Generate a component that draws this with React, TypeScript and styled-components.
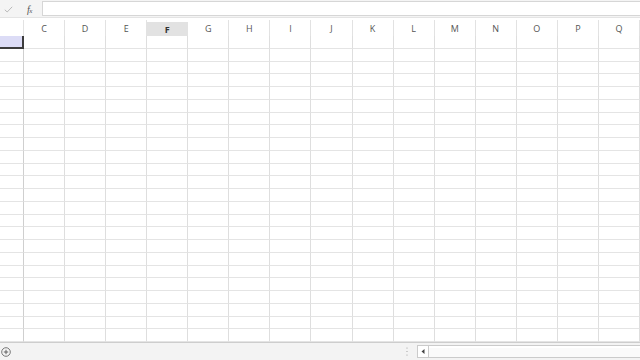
import { createGlobalStyle, styled } from "styled-components";

const GlobalStyle = createGlobalStyle`
  html, body {
    margin: 0;
    padding: 0;
    background: #ffffff;
  }
  body {
    font-family: "Open Sans", "Liberation Sans", sans-serif;
  }
`;

const Window = styled.div`
  width: 640px;
  height: 360px;
  display: flex;
  flex-direction: column;
  overflow: hidden;
  background: #ffffff;
`;

const FormulaBar = styled.div`
  height: 16px;
  display: flex;
  align-items: stretch;
  background: #f4f4f4;
  padding-top: 1px;
`;

const IconSlot = styled.div<{ $w: number }>`
  width: ${(p) => p.$w}px;
  display: flex;
  align-items: center;
  justify-content: center;
`;

const Fx = styled.span`
  font-family: "Liberation Serif", serif;
  font-style: italic;
  font-size: 10px;
  color: #555;
  letter-spacing: -0.5px;
  small {
    font-size: 7px;
  }
`;

const FormulaInput = styled.div`
  flex: 1;
  background: #ffffff;
  border: 1px solid #d6d6d6;
  border-right: none;
  margin-bottom: 1px;
`;

const Gap = styled.div`
  height: 2px;
  background: #ffffff;
  border-top: 1px solid #e4e4e4;
`;

const Grid = styled.div`
  display: grid;
  grid-template-columns: 24px repeat(15, 1fr);
`;

const HeaderRow = styled(Grid)`
  height: 15px;
  border-bottom: 1px solid #c9c9c9;
`;

const ColHead = styled.div<{ $active?: boolean }>`
  display: flex;
  align-items: center;
  justify-content: center;
  padding-top: 1px;
  font-size: 9px;
  color: ${(p) => (p.$active ? "#333" : "#555")};
  font-weight: ${(p) => (p.$active ? 700 : 400)};
  background: ${(p) => (p.$active ? "#e2e2e2" : "#ffffff")};
  border-right: 1px solid #e2e2e2;
  border-bottom: ${(p) => (p.$active ? "1px solid #9e9e9e" : "none")};
  margin-top: ${(p) => (p.$active ? "2px" : "0")};
  margin-bottom: ${(p) => (p.$active ? "-1px" : "0")};
`;

const Body = styled(Grid)`
  height: 306px;
  grid-template-rows: repeat(24, 1fr);
`;

const Cell = styled.div<{ $selected?: boolean; $edge?: boolean }>`
  box-sizing: border-box;
  border-right: 1px solid ${(p) => (p.$edge ? "#cfcfcf" : "#dedede")};
  border-bottom: 1px solid #e4e4e4;
  background: ${(p) => (p.$selected ? "#dcdcf6" : "#ffffff")};
  ${(p) =>
    p.$selected &&
    `
    border-right: 2px solid #3c3c3c;
    border-bottom: 2px solid #3c3c3c;
  `}
`;

const StatusBar = styled.div`
  flex: 1;
  display: flex;
  align-items: center;
  background: #f3f3f3;
  border-top: 1px solid #cdcdcd;
  padding-left: 1px;
`;

const AddSheet = styled.div`
  width: 10px;
  height: 10px;
  display: flex;
  align-items: center;
  justify-content: center;
`;

const Spacer = styled.div`
  flex: 1;
`;

const Dots = styled.div`
  width: 10px;
  display: flex;
  justify-content: center;
  margin-right: 5px;
`;

const Scrollbar = styled.div`
  width: 222px;
  height: 11px;
  display: flex;
  background: #ffffff;
  border: 1px solid #cbcbcb;
  border-right: none;
`;

const ScrollButton = styled.div`
  width: 10px;
  display: flex;
  align-items: center;
  justify-content: center;
  border-right: 1px solid #cbcbcb;
`;

const ScrollTrack = styled.div`
  flex: 1;
  border-top: 2px solid #ffffff;
  background: #fafafa;
`;

const letters = "CDEFGHIJKLMNOPQ".split("");
const rows = Array.from({ length: 24 }, (_, i) => i);

export default function App() {
  return (
    <Window>
      <GlobalStyle />
      <FormulaBar>
        <IconSlot $w={17}>
          <svg width="9" height="7" viewBox="0 0 9 7">
            <path d="M0.8 3.8 L3.2 6 L8.2 0.8" fill="none" stroke="#b9b9b9" strokeWidth="1" />
          </svg>
        </IconSlot>
        <IconSlot $w={25}>
          <Fx>
            f<small>x</small>
          </Fx>
        </IconSlot>
        <FormulaInput />
      </FormulaBar>
      <Gap />
      <HeaderRow>
        <ColHead />
        {letters.map((l) => (
          <ColHead key={l} $active={l === "F"}>
            {l}
          </ColHead>
        ))}
      </HeaderRow>
      <Body>
        {rows.map((r) => [
          <Cell key={`h${r}`} $edge $selected={r === 0} />,
          ...letters.map((l) => <Cell key={`${l}${r}`} />),
        ])}
      </Body>
      <StatusBar>
        <AddSheet>
          <svg width="10" height="10" viewBox="0 0 10 10">
            <circle cx="5" cy="5" r="4.3" fill="none" stroke="#6a6a6a" strokeWidth="0.9" />
            <path d="M5 2.8 V7.2 M2.8 5 H7.2" stroke="#555" strokeWidth="0.9" />
          </svg>
        </AddSheet>
        <Spacer />
        <Dots>
          <svg width="2" height="9" viewBox="0 0 2 9">
            <circle cx="1" cy="1" r="0.6" fill="#9a9a9a" />
            <circle cx="1" cy="4.5" r="0.6" fill="#9a9a9a" />
            <circle cx="1" cy="8" r="0.6" fill="#9a9a9a" />
          </svg>
        </Dots>
        <Scrollbar>
          <ScrollButton>
            <svg width="4" height="5" viewBox="0 0 4 5">
              <path d="M3.5 0 L0.5 2.5 L3.5 5 Z" fill="#444" />
            </svg>
          </ScrollButton>
          <ScrollTrack />
        </Scrollbar>
      </StatusBar>
    </Window>
  );
}
